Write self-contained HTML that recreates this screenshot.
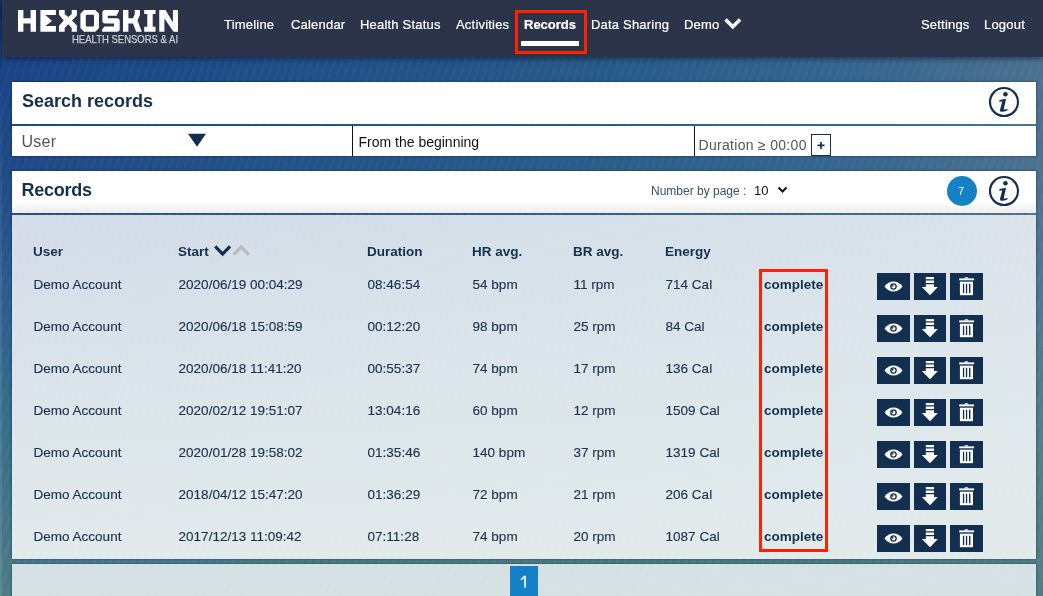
<!DOCTYPE html>
<html><head><meta charset="utf-8">
<style>
*{margin:0;padding:0;box-sizing:border-box}
html,body{width:1043px;height:596px;overflow:hidden}
body{position:relative;font-family:"Liberation Sans",sans-serif;
background:linear-gradient(to right,#1a4486 0%,#215187 34%,#285b8a 59%,#386790 85%,#4e7290 100%);}
#bgov{position:absolute;left:0;top:0;width:1043px;height:596px;
background:linear-gradient(to bottom,rgba(70,120,150,0) 10%,rgba(70,125,150,0.1) 28%,rgba(75,130,158,0.4) 50%,rgba(80,140,142,0.57) 70%,rgba(80,128,134,0.95) 100%);}
#stripes{position:absolute;left:0;top:0;width:1043px;height:596px;
background:repeating-linear-gradient(108deg,rgba(255,255,255,0.028) 0px,rgba(255,255,255,0) 3.6px,rgba(0,0,0,0.022) 3.7px,rgba(0,0,0,0) 7.3px);}
#ledge{position:absolute;left:0;top:0;width:2px;height:596px;background:linear-gradient(to bottom,rgba(0,0,30,0.35) 0px,rgba(0,0,30,0.1) 57px,rgba(255,255,255,0.03) 120px,rgba(255,255,255,0.09) 300px)}
#wrap{position:absolute;left:0;top:0;width:1043px;height:596px;will-change:transform}
.abs{position:absolute;white-space:nowrap}
#hdr{position:absolute;left:2px;top:0;width:1041px;height:57px;background:#2c3449;box-shadow:0 2px 5px rgba(0,0,20,0.45)}
.nav{position:absolute;top:16.6px;font-size:13px;letter-spacing:0.2px;color:#fff;-webkit-text-stroke:0.2px #fff;line-height:16px;white-space:nowrap}
.panel{position:absolute;left:12px;width:1024px}
.shd{position:absolute;left:12px;width:1024px;box-shadow:0 0 3px rgba(0,10,30,0.28),0 0 2px rgba(0,10,40,0.25)}
.title{position:absolute;font-weight:bold;font-size:18px;color:#13304f;line-height:20px;white-space:nowrap}
.th{position:absolute;top:244px;font-size:13.5px;font-weight:bold;color:#14304f;line-height:16px;white-space:nowrap}
.td{position:absolute;font-size:13.5px;color:#1b324d;-webkit-text-stroke:0.15px #1b324d;line-height:16px;white-space:nowrap}
.cmp{position:absolute;font-size:13.5px;font-weight:bold;color:#13304f;line-height:16px;white-space:nowrap}
.btn{position:absolute;width:33px;height:27px;background:#132f4f}
.btn svg{display:block}
</style></head><body>
<div id="bgov"></div>
<div id="stripes"></div>
<div id="ledge"></div>
<div id="hdr"></div>
<div class="shd" style="top:82px;height:74px"></div>
<div class="shd" style="top:171px;height:388px"></div>
<div class="shd" style="top:564px;height:40px"></div>
<div class="panel" style="top:82px;height:42px;background:#fff"></div>
<div class="panel" style="top:126px;height:30px;background:#fff"></div>
<div class="panel" style="top:215px;height:344px;background:linear-gradient(to bottom,rgba(255,255,255,0.8) 0%,rgba(255,255,255,0.84) 100%)"></div>
<div class="panel" style="top:171px;height:42px;background:linear-gradient(to bottom,#fff 0%,#fff 72%,#ececec 100%)"></div>
<div class="panel" style="top:564px;height:40px;background:rgba(255,255,255,0.77)"></div>

<div id="wrap">
<svg class="abs" style="left:0;top:0" width="200" height="50" viewBox="0 0 200 50">
<g fill="#fff">
<path d="M18 10h5.4v8.2h7.2V10H36v21.8h-5.4v-8.3h-7.2v8.3H18z"/>
<path d="M40.4 10H55.9v5h-10.5l6.6 6-6.6 4.9H55.9v5.9H40.4z"/>
<path d="M59 10h5.7v4l3.6 3.1 3.4-3.1v-4h5.2v5.5l-4.9 5.1 4.9 4.9v6.3h-5.2v-3.9l-3.4-3.6-3.6 3.6v3.9H59v-6l4.7-5.2L59 14.7z"/>
<path d="M84 10h11.3l3.7 3.7v14.4l-3.7 3.7H84l-3.6-3.7V13.7zM86.8 14.75a1 1 0 0 0-1 1v9.75a1 1 0 0 0 1 1h6.2a1 1 0 0 0 1-1V15.75a1 1 0 0 0-1-1z"/>
<path d="M105 10h13.8v1.2l-2.2 4.5h-8.9v2.6h9.3a2.7 2.7 0 0 1 2.7 2.7v8.1a2.7 2.7 0 0 1-2.7 2.7H102.1v-2.3l2.4-3h9.5v-3.1h-9a2.6 2.6 0 0 1-2.6-2.6v-8.2A2.6 2.6 0 0 1 105 10z"/>
<path d="M123 10h5.4v8.3h4.5l1.8-3.8V10h5.2v5l-2.4 5.5 4.3 11.3h-5.6l-3.3-8.4h-4.5v8.4H123z"/>
<path d="M144.2 10h11.3v4h-2.8v12.7h2.8v5.1h-11.3v-5.1h3.1V14h-3.1z"/>
<path d="M159.25 10h6.35l7.3 12.5V10H178v21.8h-4.5l-9.1-13.3v13.3h-5.15z"/>
</g>
</svg>
<div class="abs" style="left:71.5px;top:35px;font-size:10.4px;letter-spacing:0px;transform:scaleX(0.915);transform-origin:0 0;-webkit-text-stroke:0.25px #c9cbd2;color:#c9cbd2;line-height:10px">HEALTH SENSORS &amp; AI</div>

<div class="nav" style="left:224px">Timeline</div>
<div class="nav" style="left:291px">Calendar</div>
<div class="nav" style="left:360px">Health Status</div>
<div class="nav" style="left:456px">Activities</div>
<div class="nav" style="left:524px;font-weight:bold;letter-spacing:0">Records</div>
<div class="nav" style="left:591px">Data Sharing</div>
<div class="nav" style="left:684px">Demo</div>
<svg class="abs" style="left:723px;top:17px" width="20" height="13" viewBox="0 0 20 13"><path d="M2.5 2.5l7.3 7.3 7.3-7.3" fill="none" stroke="#fff" stroke-width="3.6"/></svg>
<div class="nav" style="left:921px">Settings</div>
<div class="nav" style="left:984px">Logout</div>
<div class="abs" style="left:521px;top:41px;width:58px;height:5px;background:#fff"></div>
<div class="abs" style="left:514.5px;top:9.5px;width:72px;height:44px;border:3px solid #ff2200"></div>

<div class="title" style="left:22px;top:91px">Search records</div>
<svg class="abs" style="left:987px;top:85px" width="34" height="34" viewBox="0 0 34 34">
<circle cx="17" cy="17" r="14" fill="none" stroke="#132f4f" stroke-width="2.2"/>
<circle cx="18.4" cy="9.2" r="2.3" fill="#132f4f"/>
<path d="M12.5 15.1L19.1 13.7L16.9 23.4Q16.6 24.8 17.9 24.6L20.7 24L20.3 25.4Q17 27 14.2 26.8Q12.6 26.6 13 24.7L15.2 16.5L12.3 16.7z" fill="#132f4f"/>
</svg>
<div class="abs" style="left:352px;top:126px;width:1px;height:30px;background:#111"></div>
<div class="abs" style="left:694px;top:126px;width:1px;height:30px;background:#111"></div>
<div class="abs" style="left:21.5px;top:133px;font-size:16px;letter-spacing:0.25px;color:#555;line-height:18px">User</div>
<svg class="abs" style="left:188px;top:133px" width="19" height="14" viewBox="0 0 19 14"><path d="M0 .8h18L9 13.8z" fill="#132f4f"/></svg>
<div class="abs" style="left:358.5px;top:134px;font-size:14px;color:#111;line-height:16px">From the beginning</div>
<div class="abs" style="left:698.5px;top:137px;font-size:14px;color:#555;line-height:16px;letter-spacing:0.3px">Duration ≥ 00:00</div>
<div class="abs" style="left:811px;top:134px;width:20px;height:22px;border:1px solid #132f4f;background:#fff"></div>
<svg class="abs" style="left:811px;top:134px" width="20" height="22" viewBox="0 0 20 22"><path d="M6.5 11.4h7M10 7.9v7" stroke="#132f4f" stroke-width="1.7"/></svg>

<div class="title" style="left:21.6px;top:180px;letter-spacing:-0.25px">Records</div>
<div class="abs" style="left:651px;top:183.5px;font-size:12px;color:#3a506a;line-height:14px">Number by page :</div>
<div class="abs" style="left:754px;top:182.5px;font-size:13px;color:#111;line-height:15px">10</div>
<svg class="abs" style="left:777px;top:185.5px" width="11" height="8" viewBox="0 0 11 8"><path d="M1.5 1.5l4 4 4-4" fill="none" stroke="#111" stroke-width="2"/></svg>
<svg class="abs" style="left:946px;top:175px" width="32" height="32" viewBox="0 0 32 32"><circle cx="16" cy="16" r="15" fill="#1380c8"/></svg>
<div class="abs" style="left:958px;top:184px;font-size:11px;color:#fff;line-height:14px">7</div>
<svg class="abs" style="left:987px;top:174px" width="34" height="34" viewBox="0 0 34 34">
<circle cx="17" cy="17" r="14" fill="none" stroke="#132f4f" stroke-width="2.2"/>
<circle cx="18.4" cy="9.2" r="2.3" fill="#132f4f"/>
<path d="M12.5 15.1L19.1 13.7L16.9 23.4Q16.6 24.8 17.9 24.6L20.7 24L20.3 25.4Q17 27 14.2 26.8Q12.6 26.6 13 24.7L15.2 16.5L12.3 16.7z" fill="#132f4f"/>
</svg>

<div class="th" style="left:33px">User</div>
<div class="th" style="left:178px">Start</div>
<svg class="abs" style="left:213px;top:244px" width="38" height="14" viewBox="0 0 38 14"><path d="M2.2 2.4l7.4 7.6 7.4-7.6" fill="none" stroke="#132f4f" stroke-width="3.2"/><path d="M20.6 10.6l7.6-7.6 7.6 7.6" fill="none" stroke="#b9bdc0" stroke-width="3.2"/></svg>
<div class="th" style="left:367px">Duration</div>
<div class="th" style="left:472px">HR avg.</div>
<div class="th" style="left:573px">BR avg.</div>
<div class="th" style="left:665px">Energy</div>

<div class="td" style="left:33.6px;top:277px">Demo Account</div>
<div class="td" style="left:178.6px;top:277px">2020/06/19 00:04:29</div>
<div class="td" style="left:367.6px;top:277px">08:46:54</div>
<div class="td" style="left:472.6px;top:277px">54 bpm</div>
<div class="td" style="left:573.6px;top:277px">11 rpm</div>
<div class="td" style="left:665.6px;top:277px">714 Cal</div>
<div class="cmp" style="left:764px;top:277px">complete</div>
<div class="btn" style="left:877px;top:273px"><svg width="33" height="27" viewBox="0 0 33 27"><path d="M7.5 13.5C10 10 13 8.6 16.5 8.6S23 10 25.5 13.5C23 17 20 18.4 16.5 18.4S10 17 7.5 13.5z" fill="#fff"/><circle cx="16.5" cy="13.5" r="3.3" fill="#132f4f"/><circle cx="16.5" cy="13.5" r="1.9" fill="#fff"/><circle cx="15.7" cy="12.8" r="0.9" fill="#132f4f"/></svg></div>
<div class="btn" style="left:914px;top:273px;width:32px"><svg width="32" height="27" viewBox="0 0 32 27"><path d="M11.8 4.1h8.2v2.1h-8.2zM11.8 7.6h8.2v2.5h-8.2zM11.8 11.2h8.2v2.8h3.9L16 22.2 7.9 14h3.9z" fill="#fff"/></svg></div>
<div class="btn" style="left:950px;top:273px"><svg width="33" height="27" viewBox="0 0 33 27"><path d="M9.2 5.4h14.9v1.9H9.2z" fill="#fff"/><path d="M14 5.5c.4-1.6 4.3-1.6 4.7 0z" fill="#fff"/><path d="M9.9 8.7h13.1v13.5H9.9z" fill="#fff"/><path d="M12.9 10.8h1.3v9.2h-1.3zM15.9 10.8h1.3v9.2h-1.3zM19 10.8h1.4v9.2H19z" fill="#132f4f"/></svg></div>
<div class="td" style="left:33.6px;top:319px">Demo Account</div>
<div class="td" style="left:178.6px;top:319px">2020/06/18 15:08:59</div>
<div class="td" style="left:367.6px;top:319px">00:12:20</div>
<div class="td" style="left:472.6px;top:319px">98 bpm</div>
<div class="td" style="left:573.6px;top:319px">25 rpm</div>
<div class="td" style="left:665.6px;top:319px">84 Cal</div>
<div class="cmp" style="left:764px;top:319px">complete</div>
<div class="btn" style="left:877px;top:315px"><svg width="33" height="27" viewBox="0 0 33 27"><path d="M7.5 13.5C10 10 13 8.6 16.5 8.6S23 10 25.5 13.5C23 17 20 18.4 16.5 18.4S10 17 7.5 13.5z" fill="#fff"/><circle cx="16.5" cy="13.5" r="3.3" fill="#132f4f"/><circle cx="16.5" cy="13.5" r="1.9" fill="#fff"/><circle cx="15.7" cy="12.8" r="0.9" fill="#132f4f"/></svg></div>
<div class="btn" style="left:914px;top:315px;width:32px"><svg width="32" height="27" viewBox="0 0 32 27"><path d="M11.8 4.1h8.2v2.1h-8.2zM11.8 7.6h8.2v2.5h-8.2zM11.8 11.2h8.2v2.8h3.9L16 22.2 7.9 14h3.9z" fill="#fff"/></svg></div>
<div class="btn" style="left:950px;top:315px"><svg width="33" height="27" viewBox="0 0 33 27"><path d="M9.2 5.4h14.9v1.9H9.2z" fill="#fff"/><path d="M14 5.5c.4-1.6 4.3-1.6 4.7 0z" fill="#fff"/><path d="M9.9 8.7h13.1v13.5H9.9z" fill="#fff"/><path d="M12.9 10.8h1.3v9.2h-1.3zM15.9 10.8h1.3v9.2h-1.3zM19 10.8h1.4v9.2H19z" fill="#132f4f"/></svg></div>
<div class="td" style="left:33.6px;top:361px">Demo Account</div>
<div class="td" style="left:178.6px;top:361px">2020/06/18 11:41:20</div>
<div class="td" style="left:367.6px;top:361px">00:55:37</div>
<div class="td" style="left:472.6px;top:361px">74 bpm</div>
<div class="td" style="left:573.6px;top:361px">17 rpm</div>
<div class="td" style="left:665.6px;top:361px">136 Cal</div>
<div class="cmp" style="left:764px;top:361px">complete</div>
<div class="btn" style="left:877px;top:357px"><svg width="33" height="27" viewBox="0 0 33 27"><path d="M7.5 13.5C10 10 13 8.6 16.5 8.6S23 10 25.5 13.5C23 17 20 18.4 16.5 18.4S10 17 7.5 13.5z" fill="#fff"/><circle cx="16.5" cy="13.5" r="3.3" fill="#132f4f"/><circle cx="16.5" cy="13.5" r="1.9" fill="#fff"/><circle cx="15.7" cy="12.8" r="0.9" fill="#132f4f"/></svg></div>
<div class="btn" style="left:914px;top:357px;width:32px"><svg width="32" height="27" viewBox="0 0 32 27"><path d="M11.8 4.1h8.2v2.1h-8.2zM11.8 7.6h8.2v2.5h-8.2zM11.8 11.2h8.2v2.8h3.9L16 22.2 7.9 14h3.9z" fill="#fff"/></svg></div>
<div class="btn" style="left:950px;top:357px"><svg width="33" height="27" viewBox="0 0 33 27"><path d="M9.2 5.4h14.9v1.9H9.2z" fill="#fff"/><path d="M14 5.5c.4-1.6 4.3-1.6 4.7 0z" fill="#fff"/><path d="M9.9 8.7h13.1v13.5H9.9z" fill="#fff"/><path d="M12.9 10.8h1.3v9.2h-1.3zM15.9 10.8h1.3v9.2h-1.3zM19 10.8h1.4v9.2H19z" fill="#132f4f"/></svg></div>
<div class="td" style="left:33.6px;top:403px">Demo Account</div>
<div class="td" style="left:178.6px;top:403px">2020/02/12 19:51:07</div>
<div class="td" style="left:367.6px;top:403px">13:04:16</div>
<div class="td" style="left:472.6px;top:403px">60 bpm</div>
<div class="td" style="left:573.6px;top:403px">12 rpm</div>
<div class="td" style="left:665.6px;top:403px">1509 Cal</div>
<div class="cmp" style="left:764px;top:403px">complete</div>
<div class="btn" style="left:877px;top:399px"><svg width="33" height="27" viewBox="0 0 33 27"><path d="M7.5 13.5C10 10 13 8.6 16.5 8.6S23 10 25.5 13.5C23 17 20 18.4 16.5 18.4S10 17 7.5 13.5z" fill="#fff"/><circle cx="16.5" cy="13.5" r="3.3" fill="#132f4f"/><circle cx="16.5" cy="13.5" r="1.9" fill="#fff"/><circle cx="15.7" cy="12.8" r="0.9" fill="#132f4f"/></svg></div>
<div class="btn" style="left:914px;top:399px;width:32px"><svg width="32" height="27" viewBox="0 0 32 27"><path d="M11.8 4.1h8.2v2.1h-8.2zM11.8 7.6h8.2v2.5h-8.2zM11.8 11.2h8.2v2.8h3.9L16 22.2 7.9 14h3.9z" fill="#fff"/></svg></div>
<div class="btn" style="left:950px;top:399px"><svg width="33" height="27" viewBox="0 0 33 27"><path d="M9.2 5.4h14.9v1.9H9.2z" fill="#fff"/><path d="M14 5.5c.4-1.6 4.3-1.6 4.7 0z" fill="#fff"/><path d="M9.9 8.7h13.1v13.5H9.9z" fill="#fff"/><path d="M12.9 10.8h1.3v9.2h-1.3zM15.9 10.8h1.3v9.2h-1.3zM19 10.8h1.4v9.2H19z" fill="#132f4f"/></svg></div>
<div class="td" style="left:33.6px;top:445px">Demo Account</div>
<div class="td" style="left:178.6px;top:445px">2020/01/28 19:58:02</div>
<div class="td" style="left:367.6px;top:445px">01:35:46</div>
<div class="td" style="left:472.6px;top:445px">140 bpm</div>
<div class="td" style="left:573.6px;top:445px">37 rpm</div>
<div class="td" style="left:665.6px;top:445px">1319 Cal</div>
<div class="cmp" style="left:764px;top:445px">complete</div>
<div class="btn" style="left:877px;top:441px"><svg width="33" height="27" viewBox="0 0 33 27"><path d="M7.5 13.5C10 10 13 8.6 16.5 8.6S23 10 25.5 13.5C23 17 20 18.4 16.5 18.4S10 17 7.5 13.5z" fill="#fff"/><circle cx="16.5" cy="13.5" r="3.3" fill="#132f4f"/><circle cx="16.5" cy="13.5" r="1.9" fill="#fff"/><circle cx="15.7" cy="12.8" r="0.9" fill="#132f4f"/></svg></div>
<div class="btn" style="left:914px;top:441px;width:32px"><svg width="32" height="27" viewBox="0 0 32 27"><path d="M11.8 4.1h8.2v2.1h-8.2zM11.8 7.6h8.2v2.5h-8.2zM11.8 11.2h8.2v2.8h3.9L16 22.2 7.9 14h3.9z" fill="#fff"/></svg></div>
<div class="btn" style="left:950px;top:441px"><svg width="33" height="27" viewBox="0 0 33 27"><path d="M9.2 5.4h14.9v1.9H9.2z" fill="#fff"/><path d="M14 5.5c.4-1.6 4.3-1.6 4.7 0z" fill="#fff"/><path d="M9.9 8.7h13.1v13.5H9.9z" fill="#fff"/><path d="M12.9 10.8h1.3v9.2h-1.3zM15.9 10.8h1.3v9.2h-1.3zM19 10.8h1.4v9.2H19z" fill="#132f4f"/></svg></div>
<div class="td" style="left:33.6px;top:487px">Demo Account</div>
<div class="td" style="left:178.6px;top:487px">2018/04/12 15:47:20</div>
<div class="td" style="left:367.6px;top:487px">01:36:29</div>
<div class="td" style="left:472.6px;top:487px">72 bpm</div>
<div class="td" style="left:573.6px;top:487px">21 rpm</div>
<div class="td" style="left:665.6px;top:487px">206 Cal</div>
<div class="cmp" style="left:764px;top:487px">complete</div>
<div class="btn" style="left:877px;top:483px"><svg width="33" height="27" viewBox="0 0 33 27"><path d="M7.5 13.5C10 10 13 8.6 16.5 8.6S23 10 25.5 13.5C23 17 20 18.4 16.5 18.4S10 17 7.5 13.5z" fill="#fff"/><circle cx="16.5" cy="13.5" r="3.3" fill="#132f4f"/><circle cx="16.5" cy="13.5" r="1.9" fill="#fff"/><circle cx="15.7" cy="12.8" r="0.9" fill="#132f4f"/></svg></div>
<div class="btn" style="left:914px;top:483px;width:32px"><svg width="32" height="27" viewBox="0 0 32 27"><path d="M11.8 4.1h8.2v2.1h-8.2zM11.8 7.6h8.2v2.5h-8.2zM11.8 11.2h8.2v2.8h3.9L16 22.2 7.9 14h3.9z" fill="#fff"/></svg></div>
<div class="btn" style="left:950px;top:483px"><svg width="33" height="27" viewBox="0 0 33 27"><path d="M9.2 5.4h14.9v1.9H9.2z" fill="#fff"/><path d="M14 5.5c.4-1.6 4.3-1.6 4.7 0z" fill="#fff"/><path d="M9.9 8.7h13.1v13.5H9.9z" fill="#fff"/><path d="M12.9 10.8h1.3v9.2h-1.3zM15.9 10.8h1.3v9.2h-1.3zM19 10.8h1.4v9.2H19z" fill="#132f4f"/></svg></div>
<div class="td" style="left:33.6px;top:529px">Demo Account</div>
<div class="td" style="left:178.6px;top:529px">2017/12/13 11:09:42</div>
<div class="td" style="left:367.6px;top:529px">07:11:28</div>
<div class="td" style="left:472.6px;top:529px">74 bpm</div>
<div class="td" style="left:573.6px;top:529px">20 rpm</div>
<div class="td" style="left:665.6px;top:529px">1087 Cal</div>
<div class="cmp" style="left:764px;top:529px">complete</div>
<div class="btn" style="left:877px;top:525px"><svg width="33" height="27" viewBox="0 0 33 27"><path d="M7.5 13.5C10 10 13 8.6 16.5 8.6S23 10 25.5 13.5C23 17 20 18.4 16.5 18.4S10 17 7.5 13.5z" fill="#fff"/><circle cx="16.5" cy="13.5" r="3.3" fill="#132f4f"/><circle cx="16.5" cy="13.5" r="1.9" fill="#fff"/><circle cx="15.7" cy="12.8" r="0.9" fill="#132f4f"/></svg></div>
<div class="btn" style="left:914px;top:525px;width:32px"><svg width="32" height="27" viewBox="0 0 32 27"><path d="M11.8 4.1h8.2v2.1h-8.2zM11.8 7.6h8.2v2.5h-8.2zM11.8 11.2h8.2v2.8h3.9L16 22.2 7.9 14h3.9z" fill="#fff"/></svg></div>
<div class="btn" style="left:950px;top:525px"><svg width="33" height="27" viewBox="0 0 33 27"><path d="M9.2 5.4h14.9v1.9H9.2z" fill="#fff"/><path d="M14 5.5c.4-1.6 4.3-1.6 4.7 0z" fill="#fff"/><path d="M9.9 8.7h13.1v13.5H9.9z" fill="#fff"/><path d="M12.9 10.8h1.3v9.2h-1.3zM15.9 10.8h1.3v9.2h-1.3zM19 10.8h1.4v9.2H19z" fill="#132f4f"/></svg></div>

<div class="abs" style="left:759.3px;top:268.5px;width:68.8px;height:283.6px;border:3px solid #ff2200"></div>

<div class="abs" style="left:510px;top:566px;width:28px;height:32px;background:#1380c8"></div>
<svg class="abs" style="left:518px;top:574px" width="10" height="16" viewBox="0 0 10 16"><path d="M6.2 1.8h1.6V13.8H6.2V4.1L3.2 6.4 2.5 5.2z" fill="#fff"/></svg>
</div>
</body></html>
